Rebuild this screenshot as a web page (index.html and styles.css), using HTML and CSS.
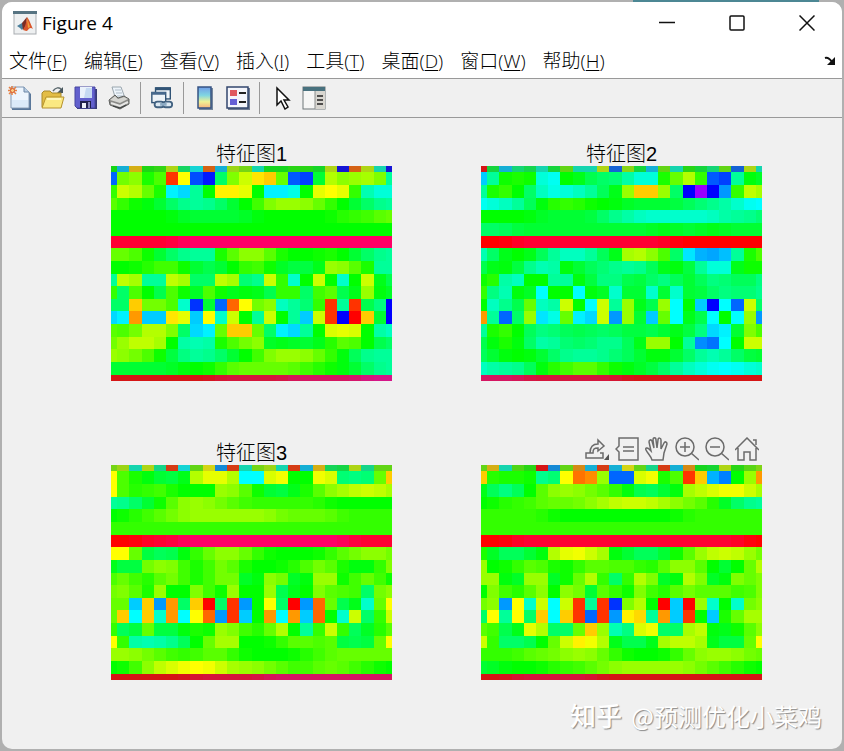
FILE: index.html
```html
<!DOCTYPE html>
<html lang="zh-CN">
<head>
  <meta charset="UTF-8">
  <meta name="viewport" content="width=device-width, initial-scale=1.0">
  <title>Figure 4</title>
  <link rel="stylesheet" href="styles.css">
</head>
<body>

<div class="window">
  <!-- 标题栏 -->
  <header class="titlebar">
    <svg class="app-icon" width="24" height="24" viewBox="0 0 24 24">
      <rect x="1" y="1" width="22" height="22" fill="#eef0f1" stroke="#a9adb1"/>
      <path d="M0 0h24v3H0z" fill="#577482"/>
      <path d="M4 15l5-3 3 3-3 4-2-2z" fill="#4a7f9c"/>
      <path d="M9 12l5-6-1 9-3 4z" fill="#7a2d25"/>
      <path d="M14 6c2 2 4 8 6 12-2-2-4-1-5 1-2 2-3 0-5 0 2-3 3-6 4-13z" fill="#d9552b"/>
      <path d="M14 7l1 10 2-1z" fill="#efa23b"/>
    </svg>
    <h1>Figure 4</h1>
    <div class="window-buttons">
      <button type="button" aria-label="最小化"><svg width="16" height="16" viewBox="0 0 16 16"><path d="M0 7.500h16"/></svg></button>
      <button type="button" aria-label="最大化"><svg width="16" height="16" viewBox="0 0 16 16"><rect x="1" y="1" width="14" height="14" rx="1"/></svg></button>
      <button type="button" aria-label="关闭"><svg width="16" height="16" viewBox="0 0 16 16"><path d="M.5.5l15 15M15.5.5l-15 15"/></svg></button>
    </div>
  </header>

  <!-- 菜单栏 -->
  <nav class="menubar">
    <button type="button">文件(<u>F</u>)</button>
    <button type="button">编辑(<u>E</u>)</button>
    <button type="button">查看(<u>V</u>)</button>
    <button type="button">插入(<u>I</u>)</button>
    <button type="button">工具(<u>T</u>)</button>
    <button type="button">桌面(<u>D</u>)</button>
    <button type="button">窗口(<u>W</u>)</button>
    <button type="button">帮助(<u>H</u>)</button>
    <button type="button" class="dock" aria-label="停靠">
      <svg width="12" height="10" viewBox="0 0 12 10"><path d="M1 2c3-1 5 1 7 4" fill="none" stroke="#111" stroke-width="2"/><path d="M11 1v8H3z" fill="#111"/></svg>
    </button>
  </nav>

  <!-- 工具栏 -->
  <div class="toolbar">
    <button type="button" aria-label="新建">
      <svg width="24" height="24" viewBox="0 0 24 24">
        <path d="M4 2h13l6 6v16H4z" fill="#59779a"/>
        <path d="M3 1h13l5 5v16H3z" fill="#edf5fd" stroke="#8098b4"/>
        <path d="M4 14h16v7H4z" fill="#dcebfa"/>
        <path d="M16 1v5h5" fill="#b9cde2" stroke="#6e89a8"/>
        <path d="M4 0v9M0 4.500h9M1 1l7 7M8 1L1 8" stroke="#e58145" stroke-width="1.500"/>
        <circle cx="4.500" cy="4.500" r="2" fill="#f8cf83" stroke="#d95c35"/>
      </svg>
    </button>
    <button type="button" aria-label="打开">
      <svg width="24" height="24" viewBox="0 0 24 24">
        <path d="M12 5c3-4 6-4 9-1" fill="none" stroke="#5e6b70" stroke-width="1.500"/>
        <path d="M22 1v6h-6z" fill="#48575e"/>
        <path d="M1 7l2-2h6l2 2h9v14H1z" fill="#e3bd45" stroke="#a88a2d"/>
        <path d="M5 11h18l-3 11H1z" fill="#fbe982" stroke="#b6922e"/>
        <path d="M6 13h14" stroke="#fff7bb" stroke-width="2"/>
      </svg>
    </button>
    <button type="button" aria-label="保存">
      <svg width="24" height="24" viewBox="0 0 24 24">
        <path d="M3 3h20v20H3z" fill="#373a75"/>
        <path d="M1 1h20v21H3l-2-2z" fill="#6260cd" stroke="#4646a0"/>
        <path d="M6 1h12v11H6z" fill="#e9f1fb"/>
        <path d="M12 2h6v10h-8z" fill="#c5d9f2"/>
        <path d="M6 15h11v7H6z" fill="#20204c"/>
        <path d="M8 17h4v5H8z" fill="#eceff7"/>
        <path d="M14 16h2v6h-2z" fill="#8788bb"/>
      </svg>
    </button>
    <button type="button" aria-label="打印">
      <svg width="24" height="24" viewBox="0 0 24 24">
        <path d="M5 1h9l4 11-9 2z" fill="#edf4fa" stroke="#9aa6ae"/>
        <path d="M8 4h6M9 7h6M10 10h6" stroke="#aebbc6"/>
        <path d="M2 14l6-5 3 3 6-2 5 3v5l-9 5-10-4z" fill="#8a8a87" stroke="#60625f"/>
        <path d="M3 14l5-4 3 3 6-2 4 2-8 4z" fill="#d5d5d1"/>
        <path d="M4 17l9 3 8-4" fill="none" stroke="#e7e7e5" stroke-width="2"/>
        <path d="M6 20l7 2 6-3" fill="none" stroke="#393c3d"/>
      </svg>
    </button>
    <span class="separator"></span>
    <button type="button" aria-label="链接绘图">
      <svg width="26" height="24" viewBox="0 0 26 24">
        <rect x="6" y="1" width="16" height="12" fill="#f0f5f9" stroke="#315476" stroke-width="1.500"/>
        <path d="M6 2h16" stroke="#315476" stroke-width="3"/>
        <rect x="2" y="6" width="15" height="11" fill="#eef3f7" stroke="#315476" stroke-width="1.500"/>
        <path d="M2 7h15" stroke="#47698d" stroke-width="3"/>
        <rect x="5" y="16" width="10" height="6" rx="3" fill="#dce9f3" stroke="#426281" stroke-width="2"/>
        <rect x="14" y="16" width="10" height="6" rx="3" fill="#dce9f3" stroke="#426281" stroke-width="2"/>
        <path d="M11 19h7" stroke="#8caac3" stroke-width="3"/>
      </svg>
    </button>
    <span class="separator"></span>
    <button type="button" aria-label="颜色栏">
      <svg width="24" height="24" viewBox="0 0 24 24">
        <defs><linearGradient id="bar" x1="0" y1="0" x2="0" y2="1"><stop stop-color="#719ce8"/><stop offset=".4" stop-color="#80d6e1"/><stop offset=".7" stop-color="#eff295"/><stop offset="1" stop-color="#f7b27d"/></linearGradient></defs>
        <path d="M6 2h14v22H6z" fill="#75879c"/>
        <rect x="5" y="1" width="13" height="21" fill="url(#bar)" stroke="#365383" stroke-width="1.500"/>
      </svg>
    </button>
    <button type="button" aria-label="图例">
      <svg width="24" height="24" viewBox="0 0 24 24">
        <path d="M2 2h22v22H2z" fill="#6f7b91"/>
        <rect x="1" y="1" width="21" height="21" fill="#f4f5fb" stroke="#32466d" stroke-width="1.500"/>
        <path d="M4 4h7v6H4z" fill="#df5960"/>
        <path d="M4 13h7v6H4z" fill="#655fd4"/>
        <path d="M13 7h7M13 16h7" stroke="#222" stroke-width="2"/>
      </svg>
    </button>
    <span class="separator"></span>
    <button type="button" aria-label="编辑绘图">
      <svg width="24" height="24" viewBox="0 0 24 24">
        <path d="M8 2v17l4-4 4 8 3-2-4-7h5z" fill="#fff" stroke="#111" stroke-width="1.500"/>
      </svg>
    </button>
    <button type="button" aria-label="属性检查器">
      <svg width="24" height="24" viewBox="0 0 24 24">
        <rect x="1" y="1" width="22" height="22" fill="#f6f6f5" stroke="#6f7778"/>
        <path d="M1 1h22v4H1z" fill="#48717e"/>
        <path d="M13 5h10v18H13z" fill="#d8d6d0"/>
        <path d="M13 5v18" stroke="#8b8e8d"/>
        <path d="M15 10h6M15 14h6M15 18h6" stroke="#222" stroke-width="1.500"/>
      </svg>
    </button>
  </div>

  <!-- 绘图区 -->
  <main class="figure">
    <section class="axes">
      <h2>特征图1</h2>
      <canvas id="map1" width="46" height="34"></canvas>
    </section>
    <section class="axes">
      <h2>特征图2</h2>
      <canvas id="map2" width="46" height="34"></canvas>
    </section>
    <section class="axes">
      <h2>特征图3</h2>
      <canvas id="map3" width="46" height="34"></canvas>
    </section>
    <section class="axes">
      <div class="axes-toolbar">
        <button type="button" aria-label="导出"><svg width="24" height="24" viewBox="0 0 24 24"><path d="M5 16H1v5h17v-5h-3M5 16c0-6 3-9 8-9V3l6 6-6 5v-3c-4 0-5 1-5 5z"/><path class="solid" d="M24 17v6h-5z"/></svg></button>
        <button type="button" aria-label="数据提示"><svg width="24" height="24" viewBox="0 0 24 24"><path d="M4 1h19v22H4v-8l-3-3 3-3zM8 10h11M8 14h11"/></svg></button>
        <button type="button" aria-label="平移"><svg width="24" height="24" viewBox="0 0 24 24"><path d="M7 23c-1-4-4-6-6-10-1-2 1-3 3-1l2 2-2-9c0-2 2-3 3-1l2 7-1-8c0-3 3-3 3 0l1 8 1-8c0-3 3-2 3 0v9l3-6c1-2 3-1 3 1l-3 9-1 7z"/></svg></button>
        <button type="button" aria-label="放大"><svg width="24" height="24" viewBox="0 0 24 24"><circle cx="10" cy="10" r="9"/><path d="M16 16l8 7M5 10h10M10 5v10"/></svg></button>
        <button type="button" aria-label="缩小"><svg width="24" height="24" viewBox="0 0 24 24"><circle cx="10" cy="10" r="9"/><path d="M16 16l8 7M5 10h10"/></svg></button>
        <button type="button" aria-label="还原视图"><svg width="24" height="24" viewBox="0 0 24 24"><path d="M0 13L12 1l12 12M3 11v12h6v-8h6v8h6V11M18 3h3v5"/></svg></button>
      </div>
      <canvas id="map4" width="46" height="34"></canvas>
    </section>
  </main>

  <p class="watermark"><b>知乎</b> @预测优化小菜鸡</p>
</div>

<script src="script.js"></script>
</body>
</html>
```
FILE: styles.css
```css
* {
  box-sizing: border-box;
}

body {
  margin: 0;
  padding: 2px;
  min-height: 100vh;
  display: flex;
  background: linear-gradient(90deg, transparent 75%, #4c8794 75%, #4c8794 97%, transparent 97%) top / 100% 2px no-repeat #b0b0b0;
  color: #000;
  font-family: "Open Sans", "Noto Sans CJK SC", sans-serif;
}

button {
  display: flex;
  align-items: center;
  justify-content: center;
  padding: 0;
  border: none;
  background: none;
  color: inherit;
  font: inherit;
}

svg {
  display: block;
}

.window {
  position: relative;
  flex: 1;
  display: flex;
  flex-direction: column;
  overflow: hidden;
  border-radius: 10px;
  background-color: #f0f0f0;
}

/* 标题栏 */
.titlebar {
  display: flex;
  align-items: center;
  gap: 5px;
  height: 41px;
  padding-left: 11px;
  background-color: #fff;
}

.titlebar h1 {
  margin: 0;
  font-size: 19px;
  font-weight: normal;
}

.window-buttons {
  display: flex;
  margin-left: auto;
}

.window-buttons button {
  width: 70px;
  height: 41px;
}

.window-buttons svg {
  fill: none;
  stroke: #111;
  stroke-width: 1.5;
}

/* 菜单栏 */
.menubar {
  display: flex;
  align-items: center;
  gap: 17px;
  height: 35px;
  padding: 0 6px 0 7px;
  background-color: #fff;
  font-size: 19px;
  font-weight: 300;
  line-height: 26px;
}

.menubar u {
  text-decoration-thickness: 1px;
  text-underline-offset: 2px;
}

.dock {
  margin-left: auto;
}

/* 工具栏 */
.toolbar {
  display: flex;
  align-items: center;
  gap: 9px;
  height: 40px;
  padding-left: 6px;
  border-top: 1px solid #999;
  border-bottom: 1px solid #999;
}

.toolbar button {
  width: 24px;
  height: 24px;
}

.separator {
  width: 1px;
  height: 32px;
  background-color: #999;
}

/* 绘图区 */
.figure {
  display: grid;
  grid-template-columns: 1fr 1fr;
  column-gap: 89px;
  row-gap: 60px;
  padding: 24px 80px 0 109px;
}

.axes h2 {
  height: 24px;
  margin: 0;
  font-family: "Liberation Sans", "Noto Sans CJK SC", sans-serif;
  font-size: 20px;
  font-weight: 300;
  line-height: 24px;
  text-align: center;
}

.axes canvas {
  display: block;
  width: 100%;
  aspect-ratio: 281 / 215;
  image-rendering: pixelated;
}

.axes-toolbar {
  display: flex;
  justify-content: flex-end;
  gap: 6px;
  height: 24px;
  padding-right: 3px;
}

.axes-toolbar button {
  width: 24px;
  height: 24px;
  margin-top: -4px;
}

.axes-toolbar svg {
  fill: none;
  stroke: #6b6b6b;
  stroke-width: 1.5;
}

.axes-toolbar .solid {
  fill: #555;
  stroke: none;
}

/* 水印 */
.watermark {
  position: absolute;
  right: 20px;
  bottom: 17px;
  margin: 0;
  color: #fff;
  font-family: "Noto Sans CJK SC", sans-serif;
  font-size: 24px;
  line-height: 32px;
  text-shadow: 1px 1px 1px #888;
}

.watermark b {
  margin-right: 4px;
  font-size: 26px;
  font-weight: 500;
}
```
FILE: script.js
```js
// 每个字母是一个单元格的色相，相邻字母相差 12 度
const hues = "abcdefghijklmnopqrstuvwxyzABCD";

const maps = {
  map1: [
    "kqekjgmpcqgiokljjlgucgou",
    "sihkibfsumigeeistlgihgin",
    "jggikpqnkfegkpqokgegjnpo",
    "ijkklmnnnmlkjhhhhijklmnn",
    "kkkkkkllllllkkkkkkkjjjii",
    "kkkkkkkkkkkkkkkkkkkkkkkk",
    "DDDDDDCCCCCCCCCCCCCCCCCC",
    "iiiklmnnnkihhikkkkjklmnn",
    "kkkjjiklmlkjikllmkhhiknn",
    "nghnnghmmghmngjokgkokgkm",
    "jmikmikliklkkmjjmjimkhkl",
    "mmeihjotlscfihonmjbnblnu",
    "qpdqqegqfogkngknqgbuaelu",
    "ijiggimqpieeimpqnkgfgkno",
    "ihgghknonkiihlkllljiikmm",
    "hhiiklnnnmlkjhhhhijkmnnn",
    "llllllkkkjiiiiiijjkklmnn",
    "aaaaaaaaaDDDDDDCCCCCCBBB"
  ],
  map2: [
    "alqnlolioogshlqiojlnisgo",
    "qnkjkopkkmmmnpokigjstnkl",
    "nkikmopoonmkheehmuxurjgh",
    "poonmkjjjkkklllllmmnnopp",
    "kkkkklllllmnnooooooonnnm",
    "mmmllllllllllllklllkllll",
    "aaaDDDDDDDDDDDDDaaaaaaaa",
    "omkkkmnoonmkhghjmprrqnki",
    "mkklnonklmmnnnmkklnpoljk",
    "kjnokknnklnnllmnmkmnmmln",
    "jmoklpkkpklollolollmnmmn",
    "konliongkpgnhkmhpkqupsgm",
    "dnsmhqoipqgrhlqipkmpkphr",
    "nkikmnmmlmmmllmlklnqplhj",
    "mkjkmonmmmnnmkhhknrspkgg",
    "mlkkklmnnnnmmlkklmnonmll",
    "onnnmkjjiijkkllmnoopppoo",
    "CCCCDDDDDDDDaaaaaaaaaaaa"
  ],
  map3: [
    "igognbpifrboigobqemlgnii",
    "fikklmkhffhppgfkkfgmnmie",
    "fikjikkkkhhiklmkkihhgggh",
    "nnmlkihhhiijjjjjjjkkkkkk",
    "kkjjiihhhhhhhhiiiiijjjjj",
    "jjjjjjjjjjjjjjjjjjjjjjjj",
    "aaaDDDCCCCCCCCCCCCCCDDDD",
    "ffilmmkjihhijkkkkkjiihhi",
    "kmlihhjkjhikkkkjjhikkljh",
    "jhjkihjkjhilkhilkhhkjhjk",
    "ihikhkkhjkhkkhmkkhjijmih",
    "iiqerdmeambrkfmarcimkoif",
    "iepeodpfcrbqkdpdqckogmjg",
    "jmlilmkjkhhjkigknjgjmlji",
    "fjnonnmkighkkkjiijilmlif",
    "hhhiijjjiijkkkkkjjiiiiii",
    "kkjhggfffghhhiijjiiijjkk",
    "aaaaaaaDDDDDDCCCCCCCCCCC"
  ],
  map4: [
    "ieoikaridqbqfinbqdklgkih",
    "ejkjknmfcdhssgfkibeqskhd",
    "kmnmkihhhiijkmmlkhggffgh",
    "kkjjjiiiihhgggghhiijlmnn",
    "jjjjjjkkkkkkkkkkkjjjjjjj",
    "jjjjjjjjjjjjjjjjjjjjjjjj",
    "aaaDDDDDDDDDDDDDDDDDDDaa",
    "jlmmlkhffghklmmlkihggghi",
    "hkkjiikkjiijijkihhikmkig",
    "hhklhhlkigjmjgilkgilkhjh",
    "khjkihkhilijkhjkihjiijjh",
    "ihrfogpgbnbtigkaqahokoih",
    "mfnfmepebsbrfendqbkqkigh",
    "ijmkfhmmiehomgfmmhgklkih",
    "gjmmmkigefhkmmkhgghkmlif",
    "jjjjiiihhhijkkkkjihhhhii",
    "llkkkkjjjiihhhhhhhiijjkk",
    "aaaDDDDDDDaaaaaaaaaaaaaa"
  ]
};

// 与相近的左右单元格取平均，使过渡更平滑
function smoothHue(row, x) {
  const current = hues.indexOf(row[x]);
  let shift = 0;
  [row[x - 1], row[x + 1]].forEach((letter) => {
    if (!letter) return;
    let diff = hues.indexOf(letter) - current;
    if (diff > 15) diff -= 30;
    if (diff < -15) diff += 30;
    if (Math.abs(diff) <= 2) shift += diff / 4;
  });
  return (current + shift + 30) % 30 * 12;
}

// 边缘的行和列只显示一半
function drawMap(id, rows) {
  const ctx = document.getElementById(id).getContext("2d");
  rows.forEach((row, y) => {
    const edge = y === 0 || y === rows.length - 1;
    for (let x = 0; x < row.length; x++) {
      ctx.fillStyle = `hsl(${smoothHue(row, x)}, ${edge ? 82 : 100}%, ${edge ? 46 : 50}%)`;
      ctx.fillRect(x * 2 - 1, y * 2 - 1, 2, 2);
    }
  });
}

for (const id in maps) {
  drawMap(id, maps[id]);
}
```
